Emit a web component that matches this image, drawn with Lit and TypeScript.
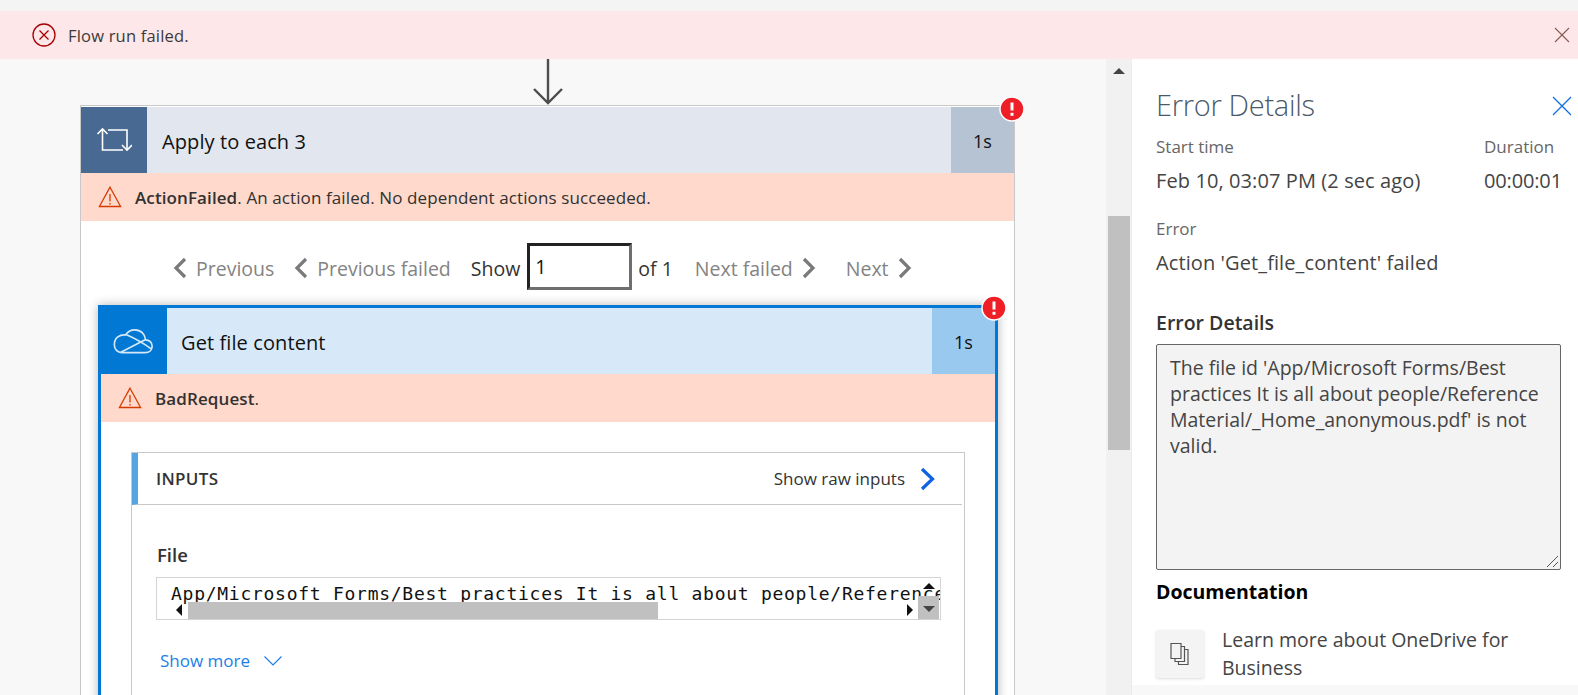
import { LitElement, html, css, svg } from "lit";
import { customElement } from "lit/decorators.js";

const warn = svg`<svg width="24" height="24" viewBox="0 0 24 24" fill="none"><path d="M12 2.2 22.6 21.5H1.4Z" stroke="#d83b01" stroke-width="1.3" stroke-linejoin="miter"/><path d="M12 9v7.5M12 18v1.6" stroke="#d83b01" stroke-width="1.3"/></svg>`;
const chevL = svg`<svg width="14" height="22" viewBox="0 0 14 22" fill="none"><path d="M12 2 3 11l9 9" stroke="#7a7a7a" stroke-width="3.2"/></svg>`;
const chevR = svg`<svg width="14" height="22" viewBox="0 0 14 22" fill="none"><path d="M2 2l9 9-9 9" stroke="#7a7a7a" stroke-width="3.2"/></svg>`;
const badge = html`<span class="badge"><svg width="26" height="26" viewBox="0 0 26 26"><circle cx="13" cy="13" r="12" fill="#ee1f26" stroke="#fff" stroke-width="1.5"/><path d="M13 6.500v8" stroke="#fff" stroke-width="3"/><path d="M13 16.800v3" stroke="#fff" stroke-width="3"/></svg></span>`;

@customElement("app-root")
export class AppRoot extends LitElement {
  static styles = css`
    :host { display: block; width: 1578px; height: 695px; overflow: hidden; background: #f8f8f8; font-family: "Open Sans", "Noto Sans", sans-serif; color: #323130; }
    * { box-sizing: border-box; }
    .top { height: 11px; background: #f4f4f4; }
    .banner { height: 48px; background: #fde7e9; display: flex; align-items: center; padding: 0 8px 0 32px; }
    .banner .msg { margin-left: 12px; font-size: 16.5px; letter-spacing: 0.2px; flex: 1; color: #3b3a39; }
    .main { height: 636px; display: flex; }
    .canvas { width: 1131px; flex: none; display: flex; overflow: hidden; }
    .flow { width: 1106px; flex: none; padding-left: 80px; }
    .arrow { height: 46px; display: flex; padding-left: 451px; }
    .card { width: 935px; border: 1px solid #c8c8c8; background: #fff; position: relative; height: 700px; padding-top: 1px; }
    .badge { position: absolute; top: -10px; right: -11px; width: 26px; height: 26px; z-index: 3; display: block; }
    .head { height: 66px; display: flex; align-items: center; background: #e2e7ef; color: #111; }
    .tile { width: 66px; height: 66px; background: #486991; display: flex; align-items: center; justify-content: center; flex: none; }
    .head .title { flex: 1; padding: 2px 0 0 15px; font-size: 20px; letter-spacing: 0.1px; }
    .head .dur { width: 63px; height: 66px; background: #b6c3d3; display: flex; align-items: center; justify-content: center; font-size: 18px; padding-top: 2px; }
    .err { height: 48px; background: #fed9cc; display: flex; align-items: center; padding-left: 17px; font-size: 17px; letter-spacing: 0.1px; color: #323130; }
    .err b { font-weight: 600; }
    .err svg { margin-right: 13px; flex: none; }
    .pager { height: 84px; display: flex; align-items: center; padding: 10px 0 0 92px; font-size: 19.5px; color: #333; }
    .pager .dim { color: #838383; display: flex; align-items: center; }
    .pager .dim svg { margin: 0 9px 0 0; }
    .pager .dim.r svg { margin: 0 0 0 9px; }
    .pager .show { margin-left: 20px; }
    .pager .gap20 { margin-left: 20px; }
    .pager .gap22 { margin-left: 22px; }
    .pager .gap30 { margin-left: 30px; }
    .input { width: 105px; height: 47px; border: 3px solid; border-color: #222 #6e6e6e #6e6e6e #222; margin: -4px 6px 0 7px; padding-left: 5px; display: flex; align-items: center; color: #111; background: #fff; }
    .inner { position: relative; width: 900px; margin-left: 17px; border: 3px solid #0078d4; border-bottom: none; background: #fff; height: 500px; box-shadow: 0 0 10px rgba(0,0,0,.28); }
    .inner .head { background: #d7e9f8; }
    .inner .tile { background: #0078d4; margin-left: -3px; width: 69px; }
    .inner .head .dur { background: #99c9ef; }
    .inner .head .title { padding-left: 14px; }
    .inner .badge { top: -13px; right: -12px; }
    .box { margin: 30px 0 0 30px; width: 834px; border: 1px solid #c8c8c8; height: 400px; }
    .bhead { height: 52px; border-bottom: 1px solid #c8c8c8; border-left: 6px solid #56a4e3; display: flex; align-items: center; padding: 0 25px 0 18px; margin-right: 2px; }
    .bhead .t { flex: 1; font-size: 17px; font-weight: 600; color: #333; letter-spacing: 0.3px; }
    .bhead .raw { font-size: 17px; color: #333; margin-right: 14px; }
    .bbody { padding: 38px 0 0 25px; }
    .label { font-size: 18.5px; font-weight: 600; line-height: 23px; color: #333; }
    .mono { margin-top: 11px; margin-left: -1px; position: relative; width: 785px; height: 43px; border: 1px solid #d4d4d4; overflow: hidden; background: #fff; }
    .mono .txt { font-family: "DejaVu Sans Mono", monospace; font-size: 18px; letter-spacing: 0.73px; line-height: 24px; white-space: nowrap; padding: 4px 0 0 14px; color: #111; }
    .hbar { position: absolute; left: 31px; top: 24px; width: 470px; height: 17px; background: #c0c0c0; }
    .ar { position: absolute; width: 0; height: 0; border-style: solid; border-color: transparent; }
    .ar.l { left: 19px; top: 26px; border-width: 6px 6px 6px 0; border-right-color: #111; }
    .ar.r { left: 750px; top: 26px; border-width: 6px 0 6px 6px; border-left-color: #111; }
    .vbar { position: absolute; left: 761px; top: 18px; width: 21px; height: 23px; background: #c0c0c0; }
    .ar.u { left: 766px; top: 5px; border-width: 0 6px 6px; border-bottom-color: #111; }
    .ar.d { left: 766px; top: 28px; border-width: 6px 6px 0; border-top-color: #444; }
    .more { margin-top: 29px; padding-left: 3px; font-size: 17px; color: #1a7fe8; display: flex; align-items: center; gap: 13px; }
    .vscroll { width: 25px; flex: none; background: #f1f1f1; display: flex; flex-direction: column; align-items: center; }
    .vscroll .up { margin-top: 9px; width: 0; height: 0; border: solid transparent; border-width: 0 6px 6px; border-bottom-color: #444; }
    .vscroll .thumb { margin-top: 142px; width: 22px; height: 234px; background: #c0c0c0; }
    .panel { flex: none; width: 447px; background: #fff; border-left: 1px solid #ececec; display: flex; flex-direction: column; }
    .pbody { height: 626px; padding: 0 17px 0 24px; overflow: hidden; }
    .ptitle { display: flex; justify-content: space-between; align-items: center; height: 44px; margin: 25px -11px 0 0; font-size: 29px; font-weight: 300; color: #4a5a68; letter-spacing: -0.3px; }
    .ptitle span { margin-top: -4px; }
    .grid { display: grid; grid-template-columns: 328px 77px; margin-top: 7px; }
    .k { font-size: 17px; color: #666; line-height: 24px; }
    .v { font-size: 20px; color: #444; line-height: 30px; letter-spacing: 0.1px; margin-top: 7px; white-space: nowrap; }
    .v.tight { letter-spacing: -0.15px; }
    .sec { margin-top: 21px; }
    .h { font-size: 19.5px; font-weight: 600; color: #333; margin-top: 32px; line-height: 26px; }
    .ta { margin-top: 8px; width: 405px; height: 226px; background: #f3f3f3; border: 1px solid #666; border-radius: 2px; padding: 10px 12px 0 13px; font-size: 19.5px; line-height: 26px; color: #444; position: relative; }
    .grip { position: absolute; right: 1px; bottom: 1px; }
    .doc { font-size: 19.5px; font-weight: 700; color: #000; margin-top: 9px; line-height: 26px; }
    .link { display: flex; margin-top: 25px; }
    .ltile { width: 48px; height: 48px; background: #f4f4f4; border-radius: 3px; box-shadow: 0 1px 3px rgba(0,0,0,.14); display: flex; align-items: center; justify-content: center; flex: none; }
    .ltext { margin-left: 18px; margin-top: -4px; font-size: 19.5px; line-height: 28px; color: #444; }
    .pfoot { height: 10px; background: #f8f8f8; }
  `;

  render() {
    return html`
      <div class="top"></div>
      <div class="banner">
        <svg width="24" height="24" viewBox="0 0 24 24" fill="none"><circle cx="12" cy="12" r="11" stroke="#a80000" stroke-width="1.3"/><path d="M7.500 7.500l9 9M16.500 7.500l-9 9" stroke="#a80000" stroke-width="1.3"/></svg>
        <span class="msg">Flow run failed.</span>
        <svg width="16" height="16" viewBox="0 0 16 16" fill="none"><path d="M1 1l14 14M15 1 1 15" stroke="#8a5a50" stroke-width="1.1"/></svg>
      </div>
      <div class="main">
        <div class="canvas">
          <div class="flow">
            <div class="arrow">
              <svg width="34" height="46" viewBox="0 0 34 46" fill="none"><path d="M17 0v44M3 30l14 14 14-14" stroke="#4d4d4d" stroke-width="2.4"/></svg>
            </div>
            <div class="card">
              ${badge}
              <div class="head">
                <div class="tile">
                  <svg width="36" height="28" viewBox="0 0 36 28" fill="none" stroke="#fff" stroke-width="1.6"><path d="M6.500 3v21H27"/><path d="M12 4h19v20"/><path d="M1.500 8l5-5 5 5"/><path d="M26 19l5 5 5-5"/></svg>
                </div>
                <div class="title">Apply to each 3</div>
                <div class="dur">1s</div>
              </div>
              <div class="err">${warn}<span><b>ActionFailed</b>. An action failed. No dependent actions succeeded.</span></div>
              <div class="pager">
                <span class="dim">${chevL}Previous</span>
                <span class="dim gap20">${chevL}Previous failed</span>
                <span class="show">Show</span>
                <span class="input">1</span>
                <span>of 1</span>
                <span class="dim r gap22">Next failed${chevR}</span>
                <span class="dim r gap30">Next${chevR}</span>
              </div>
              <div class="inner">
                ${badge}
                <div class="head">
                  <div class="tile">
                    <svg width="42" height="28" viewBox="0 0 44 30" fill="none" stroke="#d5e8f8" stroke-width="1.8"><path d="M10 27.500h25c4.500 0 7.500-3 7.500-7 0-4-3-6.800-7-6.800-.6-6-5.200-10.700-11.500-10.700-4.500 0-8 2-10 5.500C8 8 2 11 2 19c0 5 3.500 8.500 8 8.500Z"/><path d="M14.500 8c8 3.500 16 7 27 15.500M35 13.700 9 27"/></svg>
                  </div>
                  <div class="title">Get file content</div>
                  <div class="dur">1s</div>
                </div>
                <div class="err">${warn}<span><b>BadRequest</b>.</span></div>
                <div class="box">
                  <div class="bhead">
                    <span class="t">INPUTS</span>
                    <span class="raw">Show raw inputs</span>
                    <svg width="18" height="24" viewBox="0 0 18 24" fill="none"><path d="M3 2l10.500 10L3 22" stroke="#0f62e6" stroke-width="3.2"/></svg>
                  </div>
                  <div class="bbody">
                    <div class="label">File</div>
                    <div class="mono">
                      <div class="txt">App/Microsoft Forms/Best practices It is all about people/Reference</div>
                      <div class="hbar"></div>
                      <span class="ar l"></span><span class="ar r"></span>
                      <div class="vbar"></div>
                      <span class="ar u"></span><span class="ar d"></span>
                    </div>
                    <div class="more">Show more
                      <svg width="20" height="12" viewBox="0 0 20 12" fill="none"><path d="M1.500 1.500 10 10l8.500-8.500" stroke="#1a7fe8" stroke-width="1.2"/></svg>
                    </div>
                  </div>
                </div>
              </div>
            </div>
          </div>
          <div class="vscroll"><div class="up"></div><div class="thumb"></div></div>
        </div>
        <div class="panel">
          <div class="pbody">
            <div class="ptitle"><span>Error Details</span>
              <svg width="20" height="20" viewBox="0 0 20 20" fill="none"><path d="M1 1l18 18M19 1 1 19" stroke="#0f6fe6" stroke-width="1.3"/></svg>
            </div>
            <div class="grid">
              <div><div class="k">Start time</div><div class="v">Feb 10, 03:07 PM (2 sec ago)</div></div>
              <div><div class="k">Duration</div><div class="v tight">00:00:01</div></div>
            </div>
            <div class="sec"><div class="k">Error</div><div class="v">Action 'Get_file_content' failed</div></div>
            <div class="h">Error Details</div>
            <div class="ta">The file id 'App/Microsoft Forms/Best practices It is all about people/Reference Material/_Home_anonymous.pdf' is not valid.
              <svg class="grip" width="14" height="14" viewBox="0 0 14 14" fill="none"><path d="M2 13 13 2M8 13l5-5" stroke="#555" stroke-width="1"/></svg>
            </div>
            <div class="doc">Documentation</div>
            <div class="link">
              <div class="ltile"><svg width="22" height="24" viewBox="0 0 22 24" fill="none" stroke="#555" stroke-width="1.2"><path d="M2 1.500h10v15H2zM12 4.500h3.500v15H6v-3M15.500 7.500H19v15H9.500v-3"/></svg></div>
              <div class="ltext">Learn more about OneDrive for Business</div>
            </div>
          </div>
          <div class="pfoot"></div>
        </div>
      </div>
    `;
  }
}
